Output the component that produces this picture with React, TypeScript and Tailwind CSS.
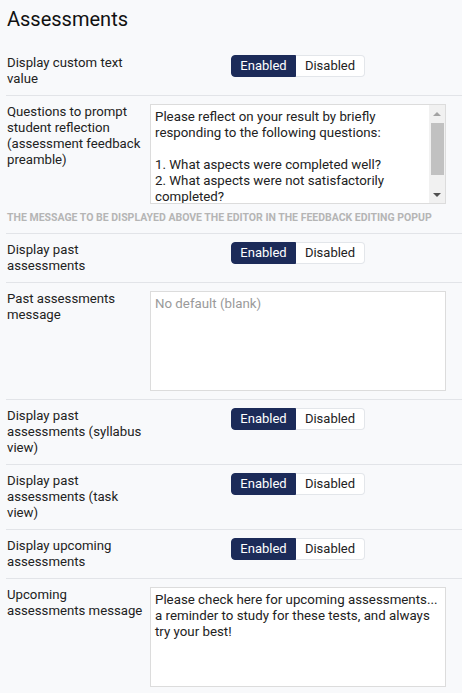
import { useState } from "react";

const PREAMBLE =
  "Please reflect on your result by briefly responding to the following questions:\n\n1. What aspects were completed well?\n2. What aspects were not satisfactorily completed?\n3. What would you do differently next time?";

const UPCOMING =
  "Please check here for upcoming assessments... a reminder to study for these tests, and always try your best!";

function Toggle({ initial = true }: { initial?: boolean }) {
  const [on, setOn] = useState(initial);
  return (
    <div className="flex justify-center">
      <div className="flex h-[22px] text-[13px] leading-[20px]">
        <button
          onClick={() => setOn(true)}
          className={`w-[65px] rounded-l-[4px] border ${
            on
              ? "border-[#1c2b59] bg-[#1c2b59] text-white"
              : "border-[#dcdfe4] bg-white text-[#222]"
          }`}
        >
          Enabled
        </button>
        <button
          onClick={() => setOn(false)}
          className={`w-[69px] rounded-r-[4px] border border-l-0 ${
            on
              ? "border-[#e3e6ea] bg-white text-[#222]"
              : "border-[#1c2b59] bg-[#1c2b59] text-white"
          }`}
        >
          Disabled
        </button>
      </div>
    </div>
  );
}

function Scrollbar() {
  return (
    <div className="flex w-[16px] shrink-0 flex-col items-center bg-[#f1f1f1]">
      <div className="flex h-[17px] items-center justify-center">
        <div className="h-0 w-0 border-x-[4px] border-b-[4px] border-x-transparent border-b-[#a3a3a3]" />
      </div>
      <div className="mt-px h-[52px] w-[13px] bg-[#c1c1c1]" />
      <div className="flex-1" />
      <div className="flex h-[17px] items-center justify-center">
        <div className="h-0 w-0 border-x-[4px] border-t-[4px] border-x-transparent border-t-[#505050]" />
      </div>
    </div>
  );
}

function Field({
  value,
  placeholder,
  scroll,
}: {
  value?: string;
  placeholder?: string;
  scroll?: boolean;
}) {
  return (
    <div className="flex h-[100px] border border-[#dcdcdc] bg-white">
      <textarea
        defaultValue={value}
        placeholder={placeholder}
        className="block h-full min-w-0 flex-1 resize-none overflow-hidden bg-white py-[4px] pl-[4px] pr-[4px] text-[13.3px] leading-[16px] text-[#222] outline-none placeholder:text-[#9a9a9a]"
      />
      {scroll && <Scrollbar />}
    </div>
  );
}

function Row({
  label,
  children,
  note,
  last,
}: {
  label: string;
  children: React.ReactNode;
  note?: string;
  last?: boolean;
}) {
  return (
    <div className={`py-[8px] ${last ? "" : "border-b border-[#e2e4e8]"}`}>
      <div className="flex">
        <div className="w-[139px] shrink-0 pl-px text-[13.2px] leading-[16px] text-[#222]">
          {label}
        </div>
        <div className="ml-[5px] w-[296px] shrink-0">{children}</div>
      </div>
      {note && (
        <p className="mt-[6px] pl-px text-[10.5px] font-bold uppercase leading-[15px] text-[#b5b5b5]">
          {note}
        </p>
      )}
    </div>
  );
}

export default function App() {
  return (
    <div
      className="min-h-[693px] bg-[#f8f9fb] pl-[6px]"
      style={{ fontFamily: "Roboto, 'Liberation Sans', sans-serif" }}
    >
      <h1 className="pl-px pt-[5px] text-[20px] leading-[28px] text-[#111]">Assessments</h1>
      <div className="mt-[14px]">
        <Row label="Display custom text value">
          <Toggle />
        </Row>
        <Row
          label="Questions to prompt student reflection (assessment feedback preamble)"
          note="The message to be displayed above the editor in the feedback editing popup"
        >
          <Field value={PREAMBLE} scroll />
        </Row>
        <Row label="Display past assessments">
          <Toggle />
        </Row>
        <Row label="Past assessments message">
          <Field placeholder="No default (blank)" />
        </Row>
        <Row label="Display past assessments (syllabus view)">
          <Toggle />
        </Row>
        <Row label="Display past assessments (task view)">
          <Toggle />
        </Row>
        <Row label="Display upcoming assessments">
          <Toggle />
        </Row>
        <Row label="Upcoming assessments message" last>
          <Field value={UPCOMING} />
        </Row>
      </div>
    </div>
  );
}
